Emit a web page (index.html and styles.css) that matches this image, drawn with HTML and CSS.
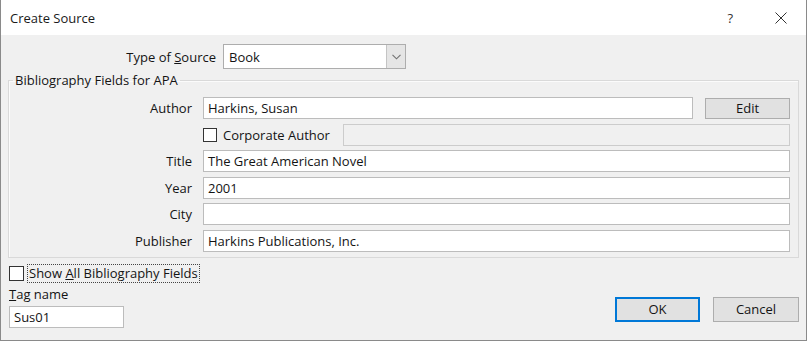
FILE: index.html
```html
<!DOCTYPE html>
<html>
<head>
<meta charset="utf-8">
<link rel="stylesheet" href="styles.css">
</head>
<body>
<div class="dialog">
  <div class="titlebar">
    <span class="title">Create Source</span>
    <span class="help">?</span>
    <svg class="close" width="12" height="12" viewBox="0 0 12 12"><path d="M0.5 0.5 L11.5 11.5 M11.5 0.5 L0.5 11.5" stroke="#333" stroke-width="1" fill="none"/></svg>
  </div>
  <div class="content">
    <div class="type-row">
      <span class="type-label">Type of <u>S</u>ource</span>
      <div class="combo">
        <span class="combo-text">Book</span>
        <span class="drop"><svg width="9" height="6" viewBox="0 0 9 6"><path d="M0.5 0.8 L4.5 4.8 L8.5 0.8" stroke="#707070" stroke-width="1.1" fill="none"/></svg></span>
      </div>
    </div>
    <fieldset class="group">
      <legend>Bibliography Fields for APA</legend>
      <div class="fields">
        <span class="lbl">Author</span>
        <div class="author-line">
          <div class="input grow">Harkins, Susan</div>
          <div class="btn edit">Edit</div>
        </div>
        <span class="lbl"></span>
        <div class="corp-line">
          <span class="check"></span>
          <span class="corp-text">Corporate Author</span>
          <div class="input disabled grow"></div>
        </div>
        <span class="lbl">Title</span>
        <div class="input">The Great American Novel</div>
        <span class="lbl">Year</span>
        <div class="input">2001</div>
        <span class="lbl">City</span>
        <div class="input"></div>
        <span class="lbl">Publisher</span>
        <div class="input">Harkins Publications, Inc.</div>
      </div>
    </fieldset>
    <div class="footer">
      <div class="footer-left">
        <div class="show-all">
          <span class="check"></span>
          <span class="focus">Show <u>A</u>ll Bibliography Fields</span>
        </div>
        <div class="tag-label"><u>T</u>ag name</div>
        <div class="input tag">Sus01</div>
      </div>
      <div class="buttons">
        <div class="btn ok">OK</div>
        <div class="btn cancel">Cancel</div>
      </div>
    </div>
  </div>
</div>
</body>
</html>
```

FILE: styles.css
```css
* { box-sizing: border-box; }
html, body { margin: 0; padding: 0; background: #ffffff; }
body {
  font-family: "Open Sans", "Noto Sans", "Liberation Sans", sans-serif;
  font-size: 13px;
  font-weight: 500;
  color: #141414;
}
.dialog {
  width: 807px;
  height: 341px;
  border: 1px solid #8a8a8a;
  border-top: none;
  background: #f0f0f0;
}
.titlebar {
  height: 35px;
  background: #ffffff;
  display: flex;
  align-items: center;
  padding-left: 9px;
}
.title {
  font-size: 13px;
  font-weight: 400;
  color: #1a1a1a;
  flex: 1;
}
.help {
  font-size: 13px;
  font-weight: 400;
  color: #333;
  margin-right: 42px;
}
.close { margin-right: 19px; }
.content {
  padding: 9px 7px 0 7px;
}
.type-row {
  display: flex;
  align-items: center;
  height: 25px;
}
.type-label {
  width: 208px;
  text-align: right;
  margin-right: 7px;
}
.combo {
  width: 183px;
  height: 25px;
  border: 1px solid #adadad;
  background: #ffffff;
  display: flex;
  align-items: center;
}
.combo-text { flex: 1; padding-left: 5px; }
.drop {
  width: 19px;
  height: 23px;
  background: #e5e5e5;
  border-left: 1px solid #c4c4c4;
  display: flex;
  align-items: center;
  justify-content: center;
}
.group {
  margin: 3px 0 0 0;
  padding: 9px 8px 5px 0;
  border: 1px solid #d9d9d9;
  box-shadow: inset 1px 1px 0 #fbfbfb;
  min-width: 0;
}
.group legend {
  padding: 0 2px;
  margin-left: 4px;
  line-height: 16px;
}
.fields {
  display: grid;
  grid-template-columns: 183px 1fr;
  column-gap: 11px;
  row-gap: 4.6px;
  grid-auto-rows: 22px;
}
.lbl {
  text-align: right;
  line-height: 22px;
}
.input {
  height: 22px;
  border: 1px solid #bcbcbc;
  background: #ffffff;
  padding-left: 4px;
  line-height: 20px;
  white-space: nowrap;
}
.input.disabled { background: #f0f0f0; border-color: #cccccc; }
.grow { flex: 1; }
.author-line, .corp-line {
  display: flex;
  align-items: center;
}
.author-line .edit { margin-left: 12px; width: 85px; height: 21px; }
.check {
  width: 14px;
  height: 14px;
  border: 1px solid #333333;
  background: #ffffff;
  flex: none;
}
.corp-text { margin-left: 6px; margin-right: 13px; }
.btn {
  background: #e1e1e1;
  border: 1px solid #adadad;
  display: flex;
  align-items: center;
  justify-content: center;
}
.footer {
  display: flex;
  justify-content: space-between;
}
.footer-left {
  padding-left: 1px;
}
.show-all {
  display: flex;
  align-items: center;
  margin-top: 6px;
  height: 19px;
}
.show-all .check { width: 15px; height: 15px; }
.focus {
  margin-left: 3px;
  border: 1px dotted #444444;
  padding: 0 1px;
  line-height: 17px;
}
.tag-label {
  margin-top: 4px;
  line-height: 14px;
}
.input.tag {
  margin-top: 5px;
  width: 115px;
}
.buttons {
  display: flex;
  align-self: flex-end;
  gap: 13px;
  margin-bottom: 6px;
}
.buttons .btn { height: 25px; }
.ok { width: 85px; border: 2px solid #0078d7; }
.cancel { width: 86px; }
```
